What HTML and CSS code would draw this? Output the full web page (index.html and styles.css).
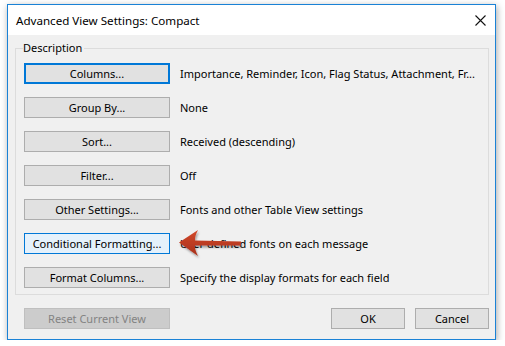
FILE: index.html
```html
<!DOCTYPE html>
<html>
<head>
<meta charset="utf-8">
<link rel="stylesheet" href="styles.css">
</head>
<body>
<div class="window">
  <div class="titlebar">
    <span class="title">Advanced View Settings: Compact</span>
    <svg class="close" width="11" height="11" viewBox="0 0 11 11"><path d="M0.5 0.5 L10.5 10.5 M10.5 0.5 L0.5 10.5" stroke="#111" stroke-width="1.1" fill="none"/></svg>
  </div>
  <div class="content">
    <fieldset class="group">
      <legend class="legend">Description</legend>
      <div class="rows">
        <div class="row"><button class="btn btn-default">Columns...</button><span class="desc">Importance, Reminder, Icon, Flag Status, Attachment, Fr...</span></div>
        <div class="row"><button class="btn">Group By...</button><span class="desc">None</span></div>
        <div class="row"><button class="btn">Sort...</button><span class="desc">Received (descending)</span></div>
        <div class="row"><button class="btn">Filter...</button><span class="desc">Off</span></div>
        <div class="row"><button class="btn">Other Settings...</button><span class="desc">Fonts and other Table View settings</span></div>
        <div class="row"><button class="btn btn-hover">Conditional Formatting...</button><span class="desc">User defined fonts on each message</span></div>
        <div class="row"><button class="btn">Format Columns...</button><span class="desc">Specify the display formats for each field</span></div>
      </div>
    </fieldset>
    <div class="footer">
      <button class="btn btn-disabled">Reset Current View</button>
      <div class="actions">
        <button class="btn btn-small">OK</button>
        <button class="btn btn-small">Cancel</button>
      </div>
    </div>
    <svg class="arrow" width="80" height="40" viewBox="170 222 80 40">
      <defs>
        <filter id="sh" x="-20%" y="-50%" width="140%" height="200%">
          <feDropShadow dx="1" dy="2" stdDeviation="1.2" flood-color="#000" flood-opacity="0.35"/>
        </filter>
        <linearGradient id="rg" x1="0" y1="0" x2="0" y2="1">
          <stop offset="0" stop-color="#d2492b"/>
          <stop offset="1" stop-color="#a8301a"/>
        </linearGradient>
      </defs>
      <path filter="url(#sh)" fill="url(#rg)" d="M178 242.5 L197 230 Q193.5 236.5 194 240.5 L240 241.5 L240 245.5 L194 245.5 Q193.5 249.5 197 256 Z"/>
    </svg>
  </div>
</div>
</body>
</html>
```

FILE: styles.css
```css
html, body {
  margin: 0;
  padding: 0;
  background: #ffffff;
}
body {
  font-family: "Noto Sans", "Open Sans", sans-serif;
  font-size: 11px;
  color: #000;
}
.window {
  margin: 4px 0 0 7px;
  width: 489px;
  height: 336px;
  box-sizing: border-box;
  border: 1px solid #1a82d6;
  background: #f0f0f0;
  box-shadow: 1px 2px 7px rgba(0, 0, 0, 0.35);
  display: flex;
  flex-direction: column;
}
.titlebar {
  height: 30px;
  flex: none;
  background: #fff;
  display: flex;
  align-items: center;
  justify-content: space-between;
  padding: 0 9px 0 8px;
}
.title {
  font-size: 11.6px;
  color: #000;
}
.close {
  display: block;
}
.content {
  position: relative;
  flex: 1;
  padding: 5px 6px 0 7px;
  display: flex;
  flex-direction: column;
}
.group {
  margin: 0;
  padding: 7px 0 6px 8px;
  border: 1px solid #dcdcdc;
  min-width: 0;
}
.legend {
  padding: 0 2px 0 0;
  margin-left: -1px;
  line-height: 16px;
  font-size: 11px;
}
.rows {
  display: flex;
  flex-direction: column;
  gap: 13px;
}
.row {
  display: flex;
  align-items: center;
  gap: 10px;
  height: 21px;
}
.btn {
  font-family: "Noto Sans", "Open Sans", sans-serif;
  font-size: 11px;
  color: #000;
  width: 146px;
  height: 21px;
  box-sizing: border-box;
  background: #e1e1e1;
  border: 1px solid #adadad;
  padding: 0;
  margin: 0;
  line-height: 19px;
  text-align: center;
  flex: none;
}
.btn-default {
  border: 2px solid #0078d7;
  line-height: 17px;
}
.btn-hover {
  background: #e5f1fb;
  border-color: #0078d7;
}
.btn-disabled {
  background: #cccccc;
  border-color: #bfbfbf;
  color: #838383;
}
.btn-small {
  width: 74px;
}
.desc {
  white-space: nowrap;
}
.footer {
  display: flex;
  justify-content: space-between;
  margin-top: 13px;
  padding-left: 9px;
}
.actions {
  display: flex;
  gap: 10px;
}
.arrow {
  position: absolute;
  left: 163px;
  top: 187px;
}
```
